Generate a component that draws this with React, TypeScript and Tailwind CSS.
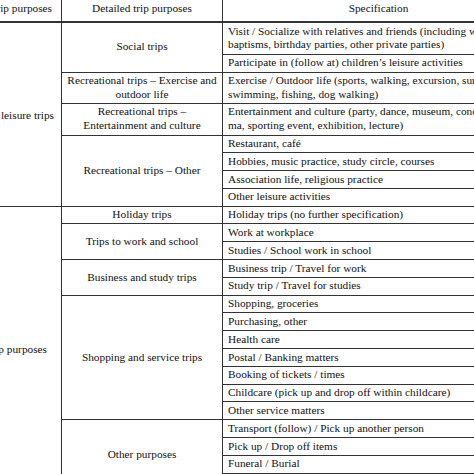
import React from 'react'

type Sub = { name: string[]; specs: string[][] }
type Group = { main: string; pad: string; span: string; subs: Sub[] }

const groups: Group[] = [
  {
    main: 'Free time / leisure trips',
    pad: 'pr-[7px]',
    span: 'row-span-8',
    subs: [
      {
        name: ['Social trips'],
        specs: [
          ['Visit / Socialize with relatives and friends (including weddings,', 'baptisms, birthday parties, other private parties)'],
          ['Participate in (follow at) children’s leisure activities'],
        ],
      },
      {
        name: ['Recreational trips – Exercise and', 'outdoor life'],
        specs: [['Exercise / Outdoor life (sports, walking, excursion, summer cottage,', 'swimming, fishing, dog walking)']],
      },
      {
        name: ['Recreational trips –', 'Entertainment and culture'],
        specs: [['Entertainment and culture (party, dance, museum, concert, cine', 'ma, sporting event, exhibition, lecture)']],
      },
      {
        name: ['Recreational trips – Other'],
        specs: [
          ['Restaurant, café'],
          ['Hobbies, music practice, study circle, courses'],
          ['Association life, religious practice'],
          ['Other leisure activities'],
        ],
      },
    ],
  },
  {
    main: 'Other trip purposes',
    pad: 'pr-[14px]',
    span: 'row-span-16',
    subs: [
      { name: ['Holiday trips'], specs: [['Holiday trips (no further specification)']] },
      { name: ['Trips to work and school'], specs: [['Work at workplace'], ['Studies / School work in school']] },
      { name: ['Business and study trips'], specs: [['Business trip / Travel for work'], ['Study trip / Travel for studies']] },
      {
        name: ['Shopping and service trips'],
        specs: [
          ['Shopping, groceries'],
          ['Purchasing, other'],
          ['Health care'],
          ['Postal / Banking matters'],
          ['Booking of tickets / times'],
          ['Childcare (pick up and drop off within childcare)'],
          ['Other service matters'],
        ],
      },
      {
        name: ['Other purposes'],
        specs: [
          ['Transport (follow) / Pick up another person'],
          ['Pick up / Drop off items'],
          ['Funeral / Burial'],
          ['Other (no further specification)'],
        ],
      },
    ],
  },
]

const subSpan: Record<number, string> = {
  1: 'row-span-1',
  2: 'row-span-2',
  4: 'row-span-4',
  7: 'row-span-7',
}

const Lines = ({ lines }: { lines: string[] }) => (
  <span>
    {lines.map((l, i) => (
      <React.Fragment key={i}>
        {i > 0 && <br />}
        {l}
      </React.Fragment>
    ))}
  </span>
)

export default function App() {
  return (
    <div className="w-[474px] h-[474px] overflow-hidden bg-white">
      <div
        className="-ml-[80px] -mt-[5px] grid w-max grid-cols-[142px_161px_311px] grid-rows-[28px_31.5px_18px_31px_32px_repeat(20,17.8px)] text-[11.3px] leading-[13.7px] text-[#111]"
        style={{ fontFamily: '"Liberation Serif", "Times New Roman", serif' }}
      >
        {/* header */}
        <div className="col-start-1 flex items-center justify-end whitespace-nowrap border-r border-b-2 border-[#333] pt-[2px] pr-[9px]">
          Trip purposes
        </div>
        <div className="col-start-2 flex items-center justify-center border-r border-b-2 border-[#333] pt-[2px]">
          Detailed trip purposes
        </div>
        <div className="col-start-3 flex items-center justify-center border-b-2 border-[#333] pt-[2px]">
          Specification
        </div>

        {groups.map((g) => (
          <React.Fragment key={g.main}>
            <div
              className={`col-start-1 ${g.span} flex items-center justify-end whitespace-nowrap border-r border-b border-[#333] pt-[3px] ${g.pad}`}
            >
              {g.main}
            </div>
            {g.subs.map((s) => (
              <React.Fragment key={s.name.join(' ')}>
                <div
                  className={`col-start-2 ${subSpan[s.specs.length]} flex items-center justify-center whitespace-nowrap border-r border-b border-[#333] text-center`}
                >
                  <Lines lines={s.name} />
                </div>
                {s.specs.map((sp) => (
                  <div
                    key={sp[0]}
                    className="col-start-3 flex items-center whitespace-nowrap border-b border-[#333] pl-[5px]"
                  >
                    <Lines lines={sp} />
                  </div>
                ))}
              </React.Fragment>
            ))}
          </React.Fragment>
        ))}
      </div>
    </div>
  )
}
